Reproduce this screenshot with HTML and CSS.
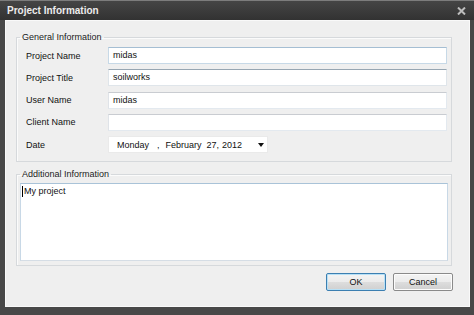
FILE: index.html
```html
<!DOCTYPE html>
<html lang="en">
<head>
    <meta charset="UTF-8">
    <title>Project Information</title>
    <link rel="stylesheet" href="styles.css">
</head>
<body>
    <div class="window">
        <div class="titlebar">
            <span class="title">Project Information</span>
            <svg class="close" width="9" height="8" viewBox="0 0 9 8">
                <path d="M1 0.5 L8 7.5 M8 0.5 L1 7.5" stroke="#bdbdbd" stroke-width="2"/>
            </svg>
        </div>

        <div class="client">
            <fieldset class="group general">
                <legend>General Information</legend>
                <div class="rows">
                    <label>Project Name</label>
                    <div class="field hot">midas</div>

                    <label>Project Title</label>
                    <div class="field dark">soilworks</div>

                    <label>User Name</label>
                    <div class="field">midas</div>

                    <label>Client Name</label>
                    <div class="field"></div>

                    <label>Date</label>
                    <div class="date">
                        <span>Monday</span>
                        <span class="comma">,</span>
                        <span class="month">February</span>
                        <span class="day">27,</span>
                        <span class="year">2012</span>
                        <span class="arrow"></span>
                    </div>
                </div>
            </fieldset>

            <fieldset class="group additional">
                <legend>Additional Information</legend>
                <div class="memo"><span class="caret"></span>My project</div>
            </fieldset>

            <div class="buttons">
                <button class="btn default">OK</button>
                <button class="btn">Cancel</button>
            </div>
        </div>
    </div>
</body>
</html>
```

FILE: styles.css
```css
* {
    margin: 0;
    padding: 0;
    box-sizing: border-box;
}

body {
    font-family: 'Liberation Sans', Arial, sans-serif;
    font-size: 9px;
    color: #111;
    background: #474747;
}

.window {
    width: 474px;
    height: 315px;
    display: flex;
    flex-direction: column;
    background: #484848;
}

.titlebar {
    height: 20px;
    border-top: 1px solid #7c7c7c;
    background: linear-gradient(#454545, #323232);
    display: flex;
    align-items: center;
    justify-content: space-between;
    padding: 0 8px 1px 7px;
}

.title {
    color: #ececec;
    font-size: 10px;
    font-weight: bold;
}

.close {
    display: block;
    margin-top: 1px;
}

.client {
    flex: 1;
    margin: 0 4px 8px 5px;
    background: #efefef;
    border: 1px solid #f9f9f9;
    padding: 10px 17px 0 10px;
    display: flex;
    flex-direction: column;
}

.group {
    border: 1px solid #d6d9dc;
    box-shadow: inset 1px 1px #fbfbfb;
}

.group legend {
    line-height: 12px;
    padding: 0 2px;
    color: #1a1a1a;
}

.general {
    padding: 4px 4px 8px 9px;
}

.general legend {
    margin-left: -6px;
}

.rows {
    display: grid;
    grid-template-columns: 82px 1fr;
    grid-auto-rows: 17px;
    row-gap: 5.25px;
    align-items: center;
}

.field {
    height: 17px;
    background: #fff;
    border: 1px solid;
    border-color: #c9ccd1 #e3e9ef #e3e9ef #dfe3e8;
    padding: 0 4px;
    line-height: 15px;
}

.field.hot {
    border-color: #a5bed3 #c7d9e7 #c7d9e7 #c7d9e7;
}

.field.dark {
    border-color: #97a6b2 #dfe5ea #dfe5ea #dfe5ea;
}

.date {
    width: 160px;
    height: 17px;
    background: #fff;
    border: 1px solid #eaeaea;
    display: flex;
    align-items: center;
    padding-left: 8px;
}

.date .comma {
    margin-left: 8px;
}

.date .month {
    margin-left: 6px;
}

.date .day {
    margin-left: 5px;
}

.date .year {
    margin-left: 3px;
}

.date .arrow {
    margin-left: auto;
    margin-right: 3px;
    border-left: 3.5px solid transparent;
    border-right: 3.5px solid transparent;
    border-top: 4px solid #111;
}

.additional {
    margin-top: 6px;
    padding: 3px 3px 4px 3px;
}

.memo {
    height: 78px;
    background: #fff;
    border: 1px solid;
    border-color: #a9c3d8 #c8d8e6 #d5dde5 #c8d8e6;
    padding: 2px 1px;
    line-height: 11px;
    display: flex;
    align-items: flex-start;
}

.caret {
    width: 1px;
    height: 11px;
    background: #000;
    margin-right: 1px;
}

.buttons {
    display: flex;
    justify-content: flex-end;
    gap: 7px;
    margin-top: 7px;
    margin-right: -1px;
}

.btn {
    width: 60px;
    height: 18px;
    font-family: 'Liberation Sans', Arial, sans-serif;
    font-size: 9px;
    color: #111;
    border: 1px solid #8a8a8a;
    border-radius: 2px;
    background: linear-gradient(#f4f4f4 0%, #ebebeb 50%, #dddddd 51%, #d0d0d0 100%);
    box-shadow: inset 0 0 0 1px #fcfcfc;
}

.btn.default {
    border-color: #3c7fb1;
    box-shadow: inset 0 0 0 1px #b7e0f6;
}
```
